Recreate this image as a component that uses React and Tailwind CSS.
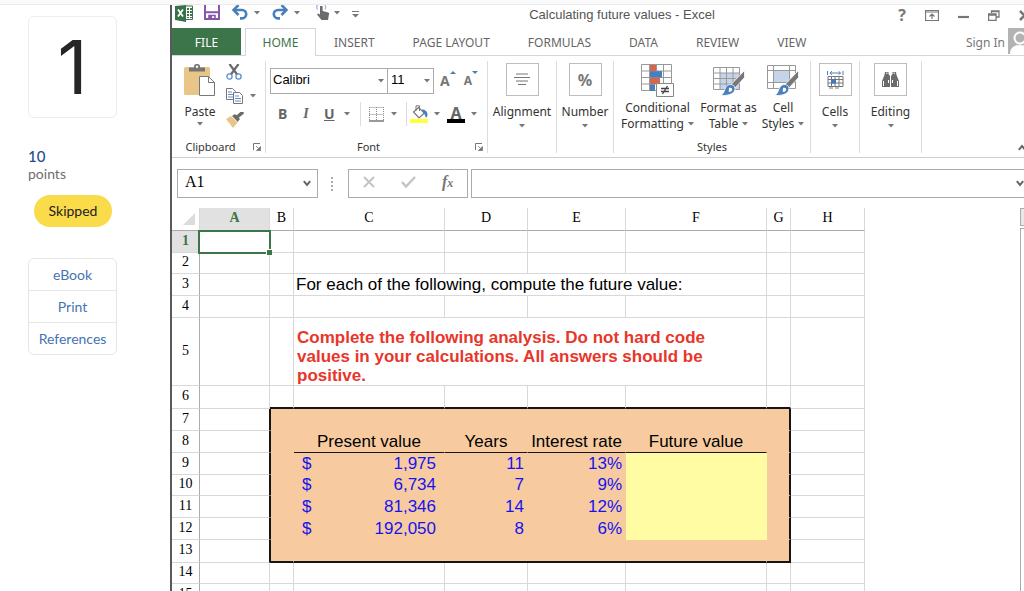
import React, { useState } from 'react';

const tabs = ['INSERT', 'PAGE LAYOUT', 'FORMULAS', 'DATA', 'REVIEW', 'VIEW'];

const columns = [
  { name: 'A', width: 'w-[70px]' },
  { name: 'B', width: 'w-[24px]' },
  { name: 'C', width: 'w-[151px]' },
  { name: 'D', width: 'w-[83px]' },
  { name: 'E', width: 'w-[98px]' },
  { name: 'F', width: 'w-[141px]' },
  { name: 'G', width: 'w-[24px]' },
  { name: 'H', width: 'w-[74px]' },
];

const problems = [
  { row: 9, present: '1,975', years: '11', rate: '13%' },
  { row: 10, present: '6,734', years: '7', rate: '9%' },
  { row: 11, present: '81,346', years: '14', rate: '12%' },
  { row: 12, present: '192,050', years: '8', rate: '6%' },
];

const Caret = ({ className = '' }) => (
  <svg viewBox="0 0 6 4" className={`w-[6px] h-[4px] shrink-0 ${className}`}>
    <path d="M0 0h6L3 3.6z" fill="#777" />
  </svg>
);

const Chevron = () => (
  <svg viewBox="0 0 8 7" className="w-2 h-[7px]">
    <path d="M.8 1.2 4 5 7.2 1.2" fill="none" stroke="#666" strokeWidth="2" />
  </svg>
);

const ExcelIcon = () => (
  <svg viewBox="0 0 18 17" className="w-[18px] h-[17px]">
    <path d="M10 1h7.500v13.500H10z" fill="#fff" stroke="#3b7549" />
    <path d="M12 3h2v2h-2zM15 3h2v2h-2zM12 6h2v2h-2zM15 6h2v2h-2zM12 9h2v2h-2zM15 9h2v2h-2zM12 12h2v1h-2zM15 12h2v1h-2z" fill="#3b7549" />
    <path d="M0 1 11 0v17L0 15z" fill="#37734a" />
    <path d="m3 4.5 5 7M8 4.5l-5 7" stroke="#fff" strokeWidth="1.8" />
  </svg>
);

const SaveIcon = () => (
  <svg viewBox="0 0 16 15" className="w-4 h-[15px]">
    <path d="M1 0v14h14V0M1 7.200h14" fill="none" stroke="#8457a8" strokeWidth="2" />
    <path d="M5 14v-3.500h6V14" fill="none" stroke="#8457a8" strokeWidth="1.600" />
    <path d="M5 10h3v4H5z" fill="#8457a8" />
  </svg>
);

const UndoIcon = ({ className = '' }) => (
  <svg viewBox="0 0 16 15" className={`w-4 h-[15px] ${className}`}>
    <path d="M2 5h8a4.200 4.200 0 0 1 0 8.400H8" fill="none" stroke="#4a7fbd" strokeWidth="2.600" />
    <path d="M6.500 0 1.500 5l5 5" fill="none" stroke="#4a7fbd" strokeWidth="2.600" />
  </svg>
);

const TouchIcon = () => (
  <svg viewBox="0 0 14 15" className="w-[14px] h-[15px]">
    <path d="M1.500 4.500a4 4 0 0 1 0-4.500M9 0a4 4 0 0 1 0 4.500" fill="none" stroke="#9bbbe0" strokeWidth="1.300" />
    <path d="M4 1h2.600v5l5.700 1.400c.8.3.9 1 .7 1.900L12 15H5.500L1 9.600l1.200-1.200L4 9.600z" fill="#6b6b6b" />
  </svg>
);

const PasteIcon = () => (
  <svg viewBox="0 0 32 34" className="w-8 h-[34px]">
    <rect x="0" y="3" width="26" height="28" rx="1.500" fill="#e9c687" />
    <path d="M5 7.500V3.500h5V2a2.500 2.500 0 0 1 2.500-2h1A2.500 2.500 0 0 1 16 2v1.500h5v4z" fill="#757575" />
    <circle cx="13" cy="2.800" r="1.200" fill="#fff" />
    <path d="M15.500 12.500h9l6 6v13h-15z" fill="#fff" stroke="#777" />
    <path d="M24.500 12.500v6h6" fill="none" stroke="#777" />
  </svg>
);

const CutIcon = () => (
  <svg viewBox="0 0 16 16" className="w-4 h-4">
    <path d="m3.500 0 8 11M12.500 0l-8 11" stroke="#6b6b6b" strokeWidth="2.200" />
    <circle cx="3.500" cy="12.500" r="2.600" fill="#fff" stroke="#5f8fca" strokeWidth="1.300" />
    <circle cx="12.500" cy="12.500" r="2.600" fill="#fff" stroke="#5f8fca" strokeWidth="1.300" />
  </svg>
);

const CopyIcon = () => (
  <svg viewBox="0 0 18 16" className="w-[18px] h-4">
    <path d="M.5.500h6l3 3v8h-9z" fill="#fff" stroke="#777" />
    <path d="M2 4h4M2 6.500h5M2 9h5" stroke="#5f8fca" />
    <path d="M7.500 4.500h6l3 3v8h-9z" fill="#fff" stroke="#777" />
    <path d="M9 8h4M9 10.500h6M9 13h6" stroke="#5f8fca" />
  </svg>
);

const PainterIcon = () => (
  <svg viewBox="0 0 18 16" className="w-[18px] h-4">
    <path d="m0 7 5-3 7 6-5 6z" fill="#e9c687" />
    <path d="m6 4 3-2 5 5-2.500 3z" fill="#6b6b6b" />
    <path d="m11 5 5-4" stroke="#6b6b6b" strokeWidth="3.500" strokeLinecap="round" />
    <path d="m5.500 4.500 6 5.500" stroke="#fff" strokeWidth=".8" />
  </svg>
);

const Launcher = () => (
  <svg viewBox="0 0 8 8" className="w-2 h-2">
    <path d="M.5 7V.500H7" fill="none" stroke="#777" />
    <path d="M3 3l3.500 3.500M7.500 3.500v4h-4z" fill="#777" stroke="#777" strokeWidth=".8" />
  </svg>
);

const BordersIcon = () => (
  <svg viewBox="0 0 15 15" className="w-[15px] h-[15px]">
    <path d="M.5.500h14M.5 7.500h14M.5 0v14M7.500 0v14M14.500 0v14" fill="none" stroke="#888" strokeDasharray="1 1" />
    <path d="M0 14h15" stroke="#777" strokeWidth="1.500" />
  </svg>
);

const FillIcon = () => (
  <svg viewBox="0 0 18 18" className="w-[18px] h-[18px]">
    <path d="m3.500 7 5-4.500 6 5.500-5.500 5z" fill="#fff" stroke="#777" strokeWidth="1.200" />
    <path d="M6 6V.800h3.500V6" fill="none" stroke="#777" />
    <path d="M12 4.500c3 0 5.500 2 5.500 5 0 1.500-.5 2.500-1.500 3-1-1-.5-3-3-5z" fill="#4a7fbd" />
    <path d="M0 14h18v4H0z" fill="#ffff3c" />
  </svg>
);

const AlignIcon = () => (
  <svg viewBox="0 0 16 13" className="w-4 h-[13px]">
    <path d="M2 1h12M0 4.500h16M2 8h12M4 11.500h8" stroke="#777" />
  </svg>
);

const ConditionalIcon = () => (
  <svg viewBox="0 0 33 34" className="w-[33px] h-[34px]">
    <path d="M.5.500h30v26H.500z" fill="#fff" />
    <path d="M9 1h6v6H9zM9 14h10v6H9z" fill="#d2694a" />
    <path d="M9 7h12v6.500H9zM9 20.500h5V27H9z" fill="#4a7fbd" />
    <path d="M.500.500h30v26H.500zM8.500 0v27M22.500 0v27M0 7h30M0 13.500h30M0 20h30M15.500 0v7" fill="none" stroke="#999" />
    <path d="M9 1h6v6H9zM9 14h10v6H9z" fill="#d2694a" />
    <path d="M9 7.500h12v6H9zM9 20.500h5V27H9z" fill="#4a7fbd" />
    <path d="M15.500 19.500h17v13h-17z" fill="#fff" stroke="#888" />
    <path d="M20 24.500h8M20 27.500h8M26.500 22l-5 8" stroke="#444" strokeWidth="1.300" />
  </svg>
);

const Brush = () => (
  <g>
    <path d="M31.500 6.500v7L22 24l-4-3.500z" fill="#777" stroke="#fff" strokeWidth=".8" />
    <path d="M17.500 20.500c2.500 0 4.500 1.500 4.500 4 0 4-4 7.500-15 7 3-1 3.500-2.500 4.500-5 1-3.500 3-6 6-6z" fill="#4a7fbd" stroke="#fff" strokeWidth=".8" />
    <path d="M16 24c2-.8 3.800.5 3 2.200-.7 1.500-2.500 1.800-3.500 1.300.5-1 .3-2 .5-3.500z" fill="#fff" />
  </g>
);

const FormatTableIcon = () => (
  <svg viewBox="0 0 32 34" className="w-8 h-[34px]">
    <path d="M.5 3.500h26v22H.500z" fill="#fff" />
    <path d="M7 9h20v17H7z" fill="#c5d4e8" />
    <path d="M.500 3.500h26v22H.500zM7 3v23M13.500 3v23M20 3v23M0 9h27M0 14.500h27M0 20h27" fill="none" stroke="#999" />
    <Brush />
  </svg>
);

const CellStylesIcon = () => (
  <svg viewBox="0 0 32 34" className="w-8 h-[34px]">
    <path d="M.500 1.500h28v23H.500z" fill="#fff" />
    <path d="M7 7h15v11H7z" fill="#c5d4e8" />
    <path d="M.500 1.500h28v23H.500zM6.500 1v24M22.500 1v24M0 6.500h29M0 18.500h29" fill="none" stroke="#999" />
    <Brush />
  </svg>
);

const CellsIcon = () => (
  <svg viewBox="0 0 17 18" className="w-[17px] h-[18px]">
    <path d="M.5 0v4M16 0v4M3 2h10.500M5 .200 3 2l2 1.800M11.500.200l2 1.800-2 1.800" fill="none" stroke="#4a7fbd" />
    <path d="M1 5.500h15v10H1zM1 8.500h15M1 12h15M4.500 5v11M8 5v11M12 5v11" fill="none" stroke="#777" />
    <path d="M4 8h5v4.500H4z" fill="#3f78bd" />
    <path d="M2 17h4M8 17h4" stroke="#777" />
  </svg>
);

const BinocularsIcon = () => (
  <svg viewBox="0 0 17 15" className="w-[17px] h-[15px]">
    <path d="M3 0h3.500v2L8 4v11H0V9l2.500-6zM14 0h-3.500v2L9 4v11h8V9l-2.500-6z" fill="#6b6b6b" />
    <path d="M1.500 9v5M15.500 9v5M6.500 8v3M10.500 8v3M4 1.200h1.500M11.500 1.200H13" stroke="#fff" />
  </svg>
);

const Group = ({ label, launcher, className = '', children }) => (
  <div className={`flex flex-col shrink-0 h-[92px] border-r border-[#dcdcdc] ${className}`}>
    <div className="flex-1">{children}</div>
    {label && (
      <div className={`relative text-[11px] leading-3 text-center ${launcher ? 'pr-4' : ''}`}>
        {label}
        {launcher && (
          <button aria-label={`${label} settings`} className="absolute right-1 top-0.5">
            <Launcher />
          </button>
        )}
      </div>
    )}
  </div>
);

const BoxButton = ({ label, children }) => (
  <button className="w-full flex flex-col items-center pt-0.5">
    <span className="w-[33px] h-[33px] border border-[#bdbdbd] flex items-center justify-center">{children}</span>
    <span className="mt-2 leading-4">{label}</span>
    <Caret className="mt-1" />
  </button>
);

const StyleButton = ({ icon, first, second, className }) => (
  <button className={`flex flex-col items-center whitespace-nowrap ${className}`}>
    {icon}
    <span className="mt-0.5 leading-4">{first}</span>
    <span className="leading-4 flex items-center gap-1">
      {second}
      <Caret />
    </span>
  </button>
);

const Sidebar = () => (
  <aside className="w-[170px] shrink-0 pl-7 pt-[11px] font-['Lato',sans-serif]">
    <div className="w-[89px] h-[102px] border border-[#ededed] rounded-md flex items-center justify-center font-['Inter',sans-serif] text-[74px] text-[#262626]">
      1
    </div>
    <div className="mt-[29px] text-[15px] leading-[18px] font-medium text-[#2a4d86]">10</div>
    <div className="text-sm leading-[18px] text-[#6e6e6e]">points</div>
    <div className="mt-3 ml-1.5 w-[78px] h-8 rounded-full bg-[#fadb4a] text-sm text-[#222] flex items-center justify-center">
      Skipped
    </div>
    <nav className="mt-[31px] w-[89px] border border-[#e6e6e6] rounded-md divide-y divide-[#e6e6e6] text-sm leading-[31px] text-center text-[#4673b3]">
      <a href="#ebook" className="block">eBook</a>
      <a href="#print" className="block">Print</a>
      <a href="#references" className="block">References</a>
    </nav>
  </aside>
);

const TitleBar = () => (
  <div className="relative h-[23px] flex items-start pl-[3px]">
    <ExcelIcon />
    <button aria-label="Save" className="ml-[11px]"><SaveIcon /></button>
    <button aria-label="Undo" className="ml-3 flex items-center gap-1.5"><UndoIcon /><Caret /></button>
    <button aria-label="Redo" className="ml-3 flex items-center gap-1.5"><UndoIcon className="-scale-x-100" /><Caret /></button>
    <button aria-label="Touch mode" className="ml-4 flex items-center gap-1"><TouchIcon /><Caret /></button>
    <button aria-label="Customize toolbar" className="ml-3 mt-1.5">
      <svg viewBox="0 0 7 7" className="w-[7px] h-[7px]">
        <path d="M0 .500h7" stroke="#777" />
        <path d="M0 3h7L3.500 6.500z" fill="#777" />
      </svg>
    </button>
    <div className="absolute inset-x-0 top-0 text-center pl-10 text-[13px] leading-[19px] text-[#555] font-['Liberation_Sans',Arial,sans-serif] pointer-events-none">
      Calculating future values - Excel
    </div>
    <div className="ml-auto mr-0.5 flex items-center gap-[19px] text-[#777]">
      <button aria-label="Help" className="text-base leading-[20px] font-bold font-['Open_Sans',sans-serif]">?</button>
      <button aria-label="Ribbon display options">
        <svg viewBox="0 0 14 11" className="w-[14px] h-[11px]">
          <path d="M.500.500h13v10H.500zM0 2h14M7 9V4.500M4.500 6.500 7 4l2.500 2.500" fill="none" stroke="#777" strokeWidth="1.200" />
        </svg>
      </button>
      <button aria-label="Minimize">
        <svg viewBox="0 0 11 11" className="w-[11px] h-[11px]"><path d="M0 7h11" stroke="#777" strokeWidth="2.200" /></svg>
      </button>
      <button aria-label="Restore">
        <svg viewBox="0 0 12 11" className="w-3 h-[11px]">
          <path d="M3.500 3V.800H11V7H8.500M.600 4h7.500v6.400H.600zM.600 5h7.500M3.500 1.500H11" fill="none" stroke="#777" strokeWidth="1.300" />
        </svg>
      </button>
      <button aria-label="Close">
        <svg viewBox="0 0 11 11" className="w-[11px] h-[11px]"><path d="m1 1 9 9M10 1 1 10" stroke="#777" strokeWidth="2.600" /></svg>
      </button>
    </div>
  </div>
);

const TabBar = () => (
  <div className="flex h-7 border-b border-[#d6d6d6] leading-[30px] text-[#666]">
    <button className="w-[69px] bg-[#3b7549] text-white">FILE</button>
    <button className="ml-1 w-[71px] h-7 bg-white border border-b-0 border-[#d6d6d6] text-[#3b7549] leading-[28px]">HOME</button>
    <div className="flex gap-0.5">
      {tabs.map((tab) => (
        <button key={tab} className="px-[18px] whitespace-nowrap">{tab}</button>
      ))}
    </div>
    <button className="ml-auto text-[#777]">Sign In</button>
    <svg viewBox="0 0 24 26" className="ml-[3px] w-6 h-[26px]">
      <path d="M0 0h24v26H0z" fill="#b3b3b3" />
      <circle cx="12" cy="10" r="5.500" fill="none" stroke="#fff" strokeWidth="2" />
      <path d="M2 26c0-6 4-9 10-9s10 3 10 9z" fill="#fff" />
    </svg>
  </div>
);

const Ribbon = () => (
  <div className="flex h-[102px] pt-[5px] border-b border-[#d0d0d0] text-[#333]">
    <Group label="Clipboard" launcher className="w-[94px]">
      <div className="flex pl-3 pt-[3px]">
        <button className="flex flex-col items-center">
          <PasteIcon />
          <span className="mt-1.5 leading-4">Paste</span>
          <Caret className="mt-0.5" />
        </button>
        <div className="ml-[10px] flex flex-col items-start gap-2">
          <button aria-label="Cut"><CutIcon /></button>
          <button aria-label="Copy" className="flex items-center gap-1.5"><CopyIcon /><Caret /></button>
          <button aria-label="Format painter"><PainterIcon /></button>
        </div>
      </div>
    </Group>

    <Group label="Font" launcher className="w-[222px]">
      <div className="flex items-center pl-1 pt-[7px] font-['Liberation_Sans',Arial,sans-serif]">
        <div className="relative">
          <select aria-label="Font name" className="appearance-none w-[118px] h-[26px] border border-[#ababab] pl-0.5 pb-0.5 text-[13px] text-black">
            <option>Calibri</option>
          </select>
          <Caret className="absolute right-1 top-[11px] pointer-events-none" />
        </div>
        <div className="relative -ml-px">
          <select aria-label="Font size" className="appearance-none w-[47px] h-[26px] border border-[#ababab] pl-[3px] pb-0.5 text-[13px] text-black">
            <option>11</option>
          </select>
          <Caret className="absolute right-1 top-[11px] pointer-events-none" />
        </div>
        <button aria-label="Increase font size" className="ml-1.5 flex items-start font-bold text-sm leading-5 text-[#777] font-['Noto_Sans',sans-serif]">
          A
          <svg viewBox="0 0 6 3" className="w-1.5 h-[3px]"><path d="M0 3h6L3 0z" fill="#4a7fbd" /></svg>
        </button>
        <button aria-label="Decrease font size" className="ml-2 flex items-start font-bold text-xs leading-5 text-[#777] font-['Noto_Sans',sans-serif]">
          A
          <svg viewBox="0 0 6 3" className="w-1.5 h-[3px]"><path d="M0 0h6L3 3z" fill="#4a7fbd" /></svg>
        </button>
      </div>
      <div className="flex items-center h-6 mt-2 pl-3 text-sm font-bold text-[#666]">
        <button className="w-2">B</button>
        <button className="w-2 ml-4 italic font-['Liberation_Serif',serif]">I</button>
        <button className="w-[10px] ml-[14px] underline">U</button>
        <Caret className="ml-[10px]" />
        <span className="w-px h-6 ml-[10px] bg-[#dcdcdc]" />
        <button aria-label="Borders" className="ml-2 flex items-center gap-[7px]"><BordersIcon /><Caret /></button>
        <span className="w-px h-6 ml-[9px] bg-[#dcdcdc]" />
        <button aria-label="Fill colour" className="ml-[3px] flex items-center gap-1.5"><FillIcon /><Caret /></button>
        <button aria-label="Font colour" className="ml-[7px] flex items-center gap-1.5">
          <span className="w-[18px] h-[18px] border-b-4 border-black text-base leading-4">A</span>
          <Caret />
        </button>
      </div>
    </Group>

    <Group className="w-[69px]">
      <BoxButton label="Alignment"><AlignIcon /></BoxButton>
    </Group>
    <Group className="w-[57px]">
      <BoxButton label="Number"><span className="text-base font-bold text-[#777]">%</span></BoxButton>
    </Group>

    <Group label="Styles" className="w-[197px]">
      <div className="flex pt-[3px]">
        <StyleButton className="w-[87px]" icon={<ConditionalIcon />} first="Conditional" second="Formatting" />
        <StyleButton className="w-[55px]" icon={<FormatTableIcon />} first="Format as" second="Table" />
        <StyleButton className="w-[54px]" icon={<CellStylesIcon />} first="Cell" second="Styles" />
      </div>
    </Group>

    <Group className="w-[49px]">
      <BoxButton label="Cells"><CellsIcon /></BoxButton>
    </Group>
    <Group className="w-[62px]">
      <BoxButton label="Editing"><BinocularsIcon /></BoxButton>
    </Group>
    <button aria-label="Collapse ribbon" className="ml-auto mr-1.5 mb-1.5 self-end rotate-180"><Chevron /></button>
  </div>
);

const FormulaBar = () => {
  const [cell, setCell] = useState('A1');
  const [formula, setFormula] = useState('');

  return (
    <div className="flex h-[50px] pt-[11px] pl-[5px]">
      <div className="w-[141px] h-[29px] border border-[#ababab] flex items-center pr-1.5">
        <input
          aria-label="Name box"
          value={cell}
          onChange={(e) => setCell(e.target.value)}
          className="flex-1 min-w-0 pl-[7px] pb-1 text-base leading-5 text-black outline-none font-['Liberation_Serif',serif]"
        />
        <button aria-label="Cell list"><Chevron /></button>
      </div>
      <svg viewBox="0 0 2 14" className="w-0.5 h-[14px] ml-[13px] mt-2">
        <path d="M1 0v14" stroke="#aaa" strokeWidth="2" strokeDasharray="2 2" />
      </svg>
      <div className="w-[120px] h-[29px] ml-[15px] border border-[#ababab] flex items-center pb-1">
        <button aria-label="Cancel" className="ml-[14px]">
          <svg viewBox="0 0 12 12" className="w-3 h-3"><path d="m1 1 10 10M11 1 1 11" stroke="#c4c4c4" strokeWidth="2" /></svg>
        </button>
        <button aria-label="Enter" className="ml-[26px]">
          <svg viewBox="0 0 15 12" className="w-[15px] h-3"><path d="m1 6 4 4.500L14 1" fill="none" stroke="#c4c4c4" strokeWidth="2.500" /></svg>
        </button>
        <button aria-label="Insert function" className="ml-[26px] text-base leading-5 font-bold italic text-[#777] font-['Liberation_Serif',serif]">
          f<span className="text-xs">x</span>
        </button>
      </div>
      <div className="flex-1 h-[29px] ml-[3px] border border-[#ababab] flex items-center pr-[7px]">
        <input
          aria-label="Formula"
          value={formula}
          onChange={(e) => setFormula(e.target.value)}
          className="flex-1 min-w-0 px-2 text-base outline-none"
        />
        <button aria-label="Expand formula bar"><Chevron /></button>
      </div>
    </div>
  );
};

const RowHeader = ({ n, active }) => (
  <th
    scope="row"
    className={`border-r border-b border-r-[#ababab] border-b-[#d8d8d8] p-0 pb-0.5 text-sm leading-4 font-['Liberation_Serif',serif] ${active ? 'bg-[#e1e1e1] font-bold text-[#3b7549]' : 'font-normal text-black'}`}
  >
    {n}
  </th>
);

const Cell = ({ className = 'border-[#d8d8d8]', children, ...rest }) => (
  <td className={`border-r border-b p-0 leading-5 whitespace-nowrap ${className}`} {...rest}>{children}</td>
);

const BlankRow = ({ n, height }) => (
  <tr className={height}>
    <RowHeader n={n} />
    {columns.map((c) => <Cell key={c.name} />)}
  </tr>
);

// Rows of the bordered block B7:G13
const BlockRow = ({ n, height, last, children }) => {
  const edge = last ? 'border-b-2 border-b-[#151515]' : 'border-b-transparent';
  return (
    <tr className={height}>
      <RowHeader n={n} />
      <Cell className="border-r-[#151515] border-b-[#d8d8d8]" />
      <Cell className={`border-l border-l-[#151515] border-r-transparent bg-[#f7cb9f] ${edge}`} />
      {children || (
        <Cell colSpan={4} className={`border-r-transparent bg-[#f7cb9f] ${edge}`} />
      )}
      <Cell className={`border-r-2 border-r-[#151515] bg-[#f7cb9f] ${edge}`} />
      <Cell />
    </tr>
  );
};

const heading = 'border-r-transparent border-b-[#151515] bg-[#f7cb9f] text-center text-black';
const value = 'border-transparent bg-[#f7cb9f] text-right text-[#1414f0]';

const Sheet = () => (
  <div className="flex flex-1 min-h-0 overflow-hidden">
    <div className="overflow-hidden">
      <table className="table-fixed border-separate border-spacing-0 w-[693px] font-['Liberation_Serif',serif]">
        <thead>
          <tr className="h-[23px]">
            <th className="w-7 border-r border-b border-r-[#d8d8d8] border-b-[#ababab] p-0">
              <svg viewBox="0 0 12 12" className="w-3 h-3 ml-[11px]"><path d="M12 0v12H0z" fill="#dcdcdc" /></svg>
            </th>
            {columns.map((c) => (
              <th
                key={c.name}
                scope="col"
                className={`${c.width} border-r border-b border-r-[#d8d8d8] border-b-[#ababab] p-0 pb-0.5 text-sm leading-4 ${c.name === 'A' ? 'bg-[#e1e1e1] font-bold text-[#3b7549]' : 'font-normal text-black'}`}
              >
                {c.name}
              </th>
            ))}
          </tr>
        </thead>
        <tbody className="font-['Liberation_Sans',Arial,sans-serif] text-[17px]">
          <tr className="h-[22px]">
            <RowHeader n={1} active />
            <Cell className="relative border-[#d8d8d8]">
              <span className="absolute -top-px -left-0.5 -right-0.5 -bottom-0.5 border-2 border-[#3b7549]" />
              <span className="absolute -right-[3px] -bottom-[3px] w-[6px] h-[6px] bg-[#3b7549] border-t border-l border-white" />
            </Cell>
            {columns.slice(1).map((c) => <Cell key={c.name} />)}
          </tr>
          <BlankRow n={2} height="h-[21px]" />
          <tr className="h-[22px]">
            <RowHeader n={3} />
            <Cell />
            <Cell />
            <Cell colSpan={4} className="border-[#d8d8d8] pl-0.5 text-black">
              For each of the following, compute the future value:
            </Cell>
            <Cell />
            <Cell />
          </tr>
          <BlankRow n={4} height="h-[22px]" />
          <tr className="h-[68px]">
            <RowHeader n={5} />
            <Cell />
            <Cell />
            <Cell colSpan={4} className="border-[#d8d8d8] pl-[3px] align-bottom">
              <p className="w-[430px] whitespace-normal leading-[19px] font-bold text-[#e8362a]">
                Complete the following analysis. Do not hard code values in your calculations. All answers should be positive.
              </p>
            </Cell>
            <Cell />
            <Cell />
          </tr>
          <tr className="h-[23px]">
            <RowHeader n={6} />
            <Cell />
            {columns.slice(1, 7).map((c) => (
              <Cell key={c.name} className="border-r-[#d8d8d8] border-b-2 border-b-[#151515]" />
            ))}
            <Cell />
          </tr>
          <BlockRow n={7} height="h-[22px]" />
          <BlockRow n={8} height="h-[22px]">
            <Cell className={heading}>Present value</Cell>
            <Cell className={heading}>Years</Cell>
            <Cell className={heading}>Interest rate</Cell>
            <Cell className={heading}>Future value</Cell>
          </BlockRow>
          {problems.map((p) => (
            <BlockRow key={p.row} n={p.row} height={p.row === 10 ? 'h-[21px]' : 'h-[22px]'}>
              <Cell className={`${value} px-2`}>
                <div className="flex justify-between">
                  <span>$</span>
                  <span>{p.present}</span>
                </div>
              </Cell>
              <Cell className={`${value} pr-[3px]`}>{p.years}</Cell>
              <Cell className={`${value} pr-[3px]`}>{p.rate}</Cell>
              <Cell className="border-transparent bg-[#fffca4]" />
            </BlockRow>
          ))}
          <BlockRow n={13} height="h-[23px]" last />
          <BlankRow n={14} height="h-[21px]" />
          <BlankRow n={15} height="h-[22px]" />
        </tbody>
      </table>
    </div>
    <div className="ml-auto w-3 flex flex-col gap-0.5">
      <div className="h-[18px] border border-[#ababab] bg-[#e8e8e8]" />
      <div className="flex-1 border border-b-0 border-[#ababab]" />
    </div>
  </div>
);

const App = () => (
  <div className="h-screen flex flex-col overflow-hidden bg-white">
    <div className="h-[5px] shrink-0 bg-[#fafafa] border-b border-[#ececec]" />
    <div className="flex flex-1 min-h-0">
      <Sidebar />
      <main className="flex-1 min-w-0 border-l-2 border-[#58595b] overflow-hidden">
        <div className="h-full -mr-2 flex flex-col text-xs font-['Noto_Sans',sans-serif]">
          <TitleBar />
          <TabBar />
          <Ribbon />
          <FormulaBar />
          <Sheet />
        </div>
      </main>
    </div>
  </div>
);

export default App;
